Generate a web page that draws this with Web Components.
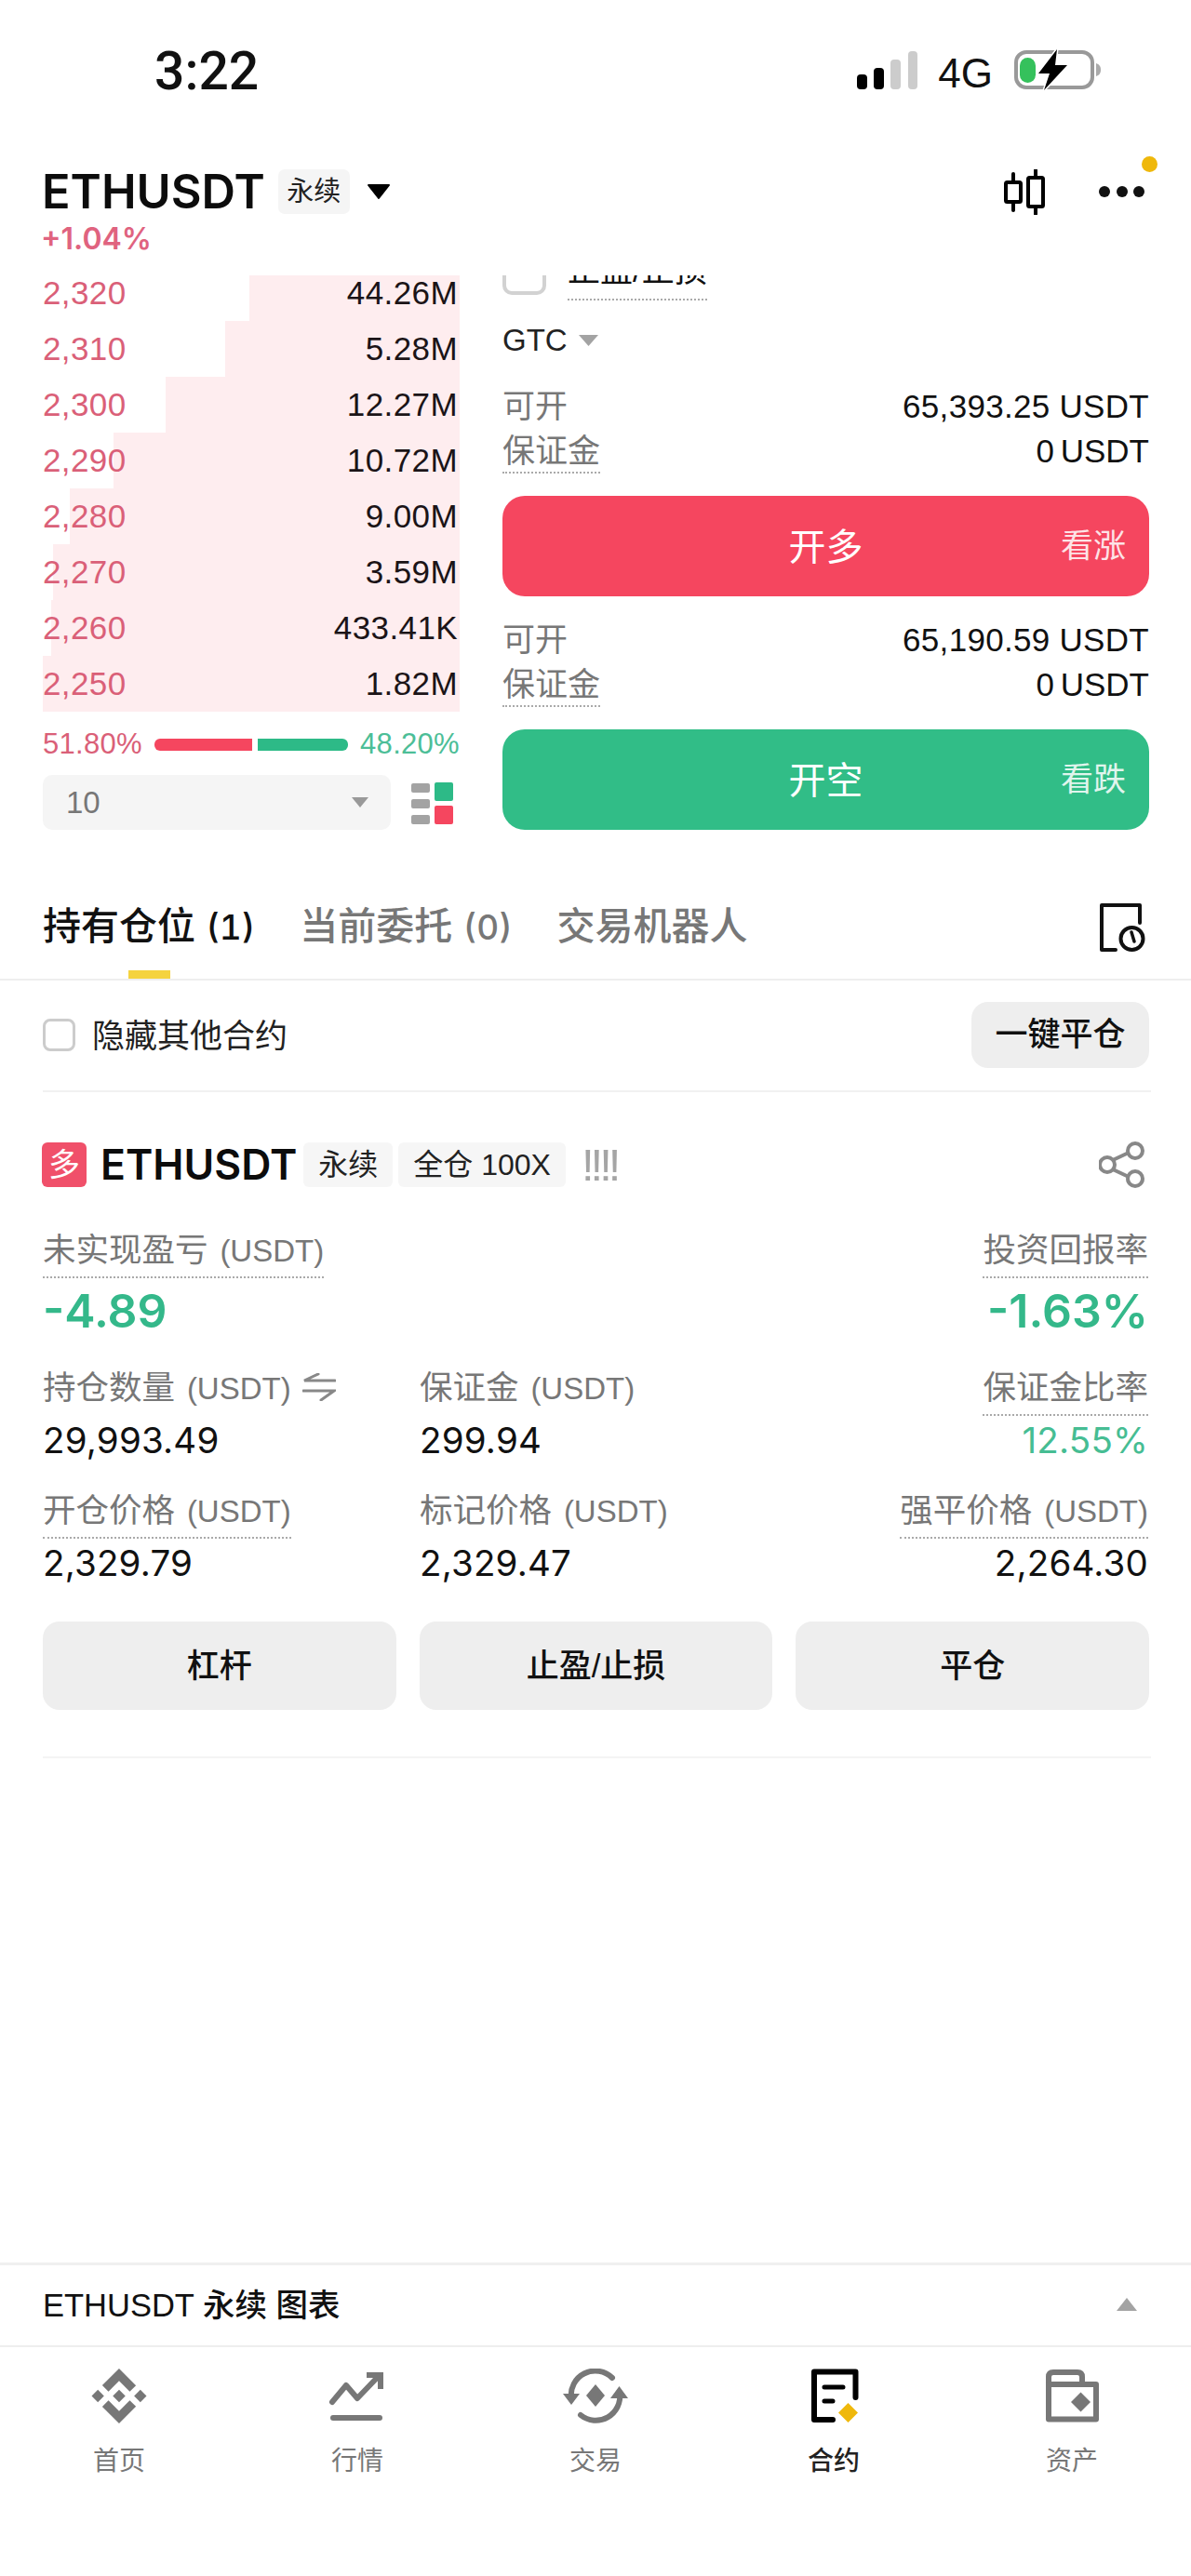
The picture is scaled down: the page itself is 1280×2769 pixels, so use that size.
<!DOCTYPE html>
<html lang="zh">
<head>
<meta charset="utf-8">
<title>ETHUSDT 永续</title>
<style>
  html, body { margin: 0; height: 100%; background: #fff; }
  body { font-family: "Liberation Sans", "Noto Sans CJK SC", sans-serif; color: #111; }
</style>
</head>
<body>
<trade-app>
  <status-bar></status-bar>
  <pair-header></pair-header>
  <trade-panel>
    <order-book slot="left"></order-book>
    <order-form slot="right"></order-form>
  </trade-panel>
  <position-tabs></position-tabs>
  <position-toolbar></position-toolbar>
  <position-card></position-card>
  <chart-bar></chart-bar>
  <tab-bar></tab-bar>
</trade-app>

<script>
// petite classe de base : on cree le shadow DOM et on pose le style + le html
class Base extends HTMLElement {
  constructor() {
    super();
    this.shadowroot = this.attachShadow({ mode: 'open' });
  }
  connectedCallback() {
    this.shadowroot.innerHTML = `<style>${this.css()}</style>${this.html()}`;
  }
}

// le conteneur de la page
class TradeApp extends Base {
  css() { return `
    :host { display: flex; flex-direction: column; height: 100vh; overflow: hidden; }
  `; }
  html() { return `<slot></slot>`; }
}

// barre de statut du telephone
class StatusBar extends Base {
  css() { return `
    :host { display: flex; height: 182px; box-sizing: border-box; padding: 49px 97px 0 166px; justify-content: space-between; }
    .time { font: 500 57px/56px Roboto, sans-serif; color: #111; }
    .right { display: flex; align-items: center; height: 56px; }
    .net { font-size: 44px; line-height: 56px; margin: 3px 23px 0 22px; color: #111; }
    svg { display: block; }
    .sig { margin-bottom: 3px; }
    .bat { margin-bottom: 4px; }
  `; }
  html() { return `
    <div class="time">3:22</div>
    <div class="right">
      <svg class="sig" width="65" height="41" viewBox="0 0 65 41">
        <rect x="0" y="25" width="11" height="16" rx="4" fill="#000"/>
        <rect x="18" y="18" width="11" height="23" rx="4" fill="#000"/>
        <rect x="36" y="9" width="11" height="32" rx="4" fill="#ccc"/>
        <rect x="55" y="0" width="10" height="41" rx="4" fill="#ccc"/>
      </svg>
      <div class="net">4G</div>
      <svg class="bat" width="93" height="44" viewBox="0 0 93 44">
        <rect x="2" y="3" width="82" height="38" rx="11" fill="none" stroke="#999" stroke-width="4"/>
        <path d="M88 15c3 1 5 3 5 7s-2 6-5 7z" fill="#aaa"/>
        <rect x="6" y="9" width="17" height="27" rx="8.5" fill="#35c15c"/>
        <path d="M46 0 L26 26 H38 L32 44 L57 17 H44 Z" fill="#000" stroke="#fff" stroke-width="3" paint-order="stroke" stroke-linejoin="round"/>
      </svg>
    </div>
  `; }
}

// titre de la paire et icones a droite
class PairHeader extends Base {
  css() { return `
    :host { display: block; padding: 0 50px 19px 46px; }
    .top { display: flex; align-items: center; height: 48px; }
    .name { margin-left: -1px; font: 600 50.5px/48px Inter, sans-serif; color: #0c0c0c; }
    .tag { margin-left: 14px; width: 77px; height: 48px; background: #f5f5f5; border-radius: 7px; font-size: 29px; line-height: 48px; text-align: center; color: #222; }
    .arrow { margin-left: 18px; }
    .icons { margin-left: auto; display: flex; align-items: center; gap: 58px; }
    .more { position: relative; display: block; width: 49px; height: 12px; }
    .badge { position: absolute; left: 46px; top: -32px; width: 17px; height: 17px; border-radius: 50%; background: #efb80b; }
    svg { display: block; }
    .change { margin: 7px 0 0 -2px; font: 600 32px/40px Inter, sans-serif; color: #e0637f; }
  `; }
  html() { return `
    <div class="top">
      <span class="name">ETHUSDT</span>
      <span class="tag">永续</span>
      <svg class="arrow" width="26" height="17" viewBox="0 0 26 17"><path d="M2 1H24L13 15Z" fill="#000" stroke="#000" stroke-width="2" stroke-linejoin="round"/></svg>
      <div class="icons">
        <svg width="44" height="49" viewBox="0 0 44 49" fill="none" stroke="#000" stroke-width="4">
          <path d="M10 5V44" stroke-linecap="round"/>
          <rect x="2" y="14" width="16" height="21" rx="1.5" fill="#fff"/>
          <path d="M34 1V48" stroke-linecap="round"/>
          <rect x="26" y="9" width="16" height="31" rx="1.5" fill="#fff"/>
        </svg>
        <span class="more">
          <svg width="49" height="12" viewBox="0 0 49 12" fill="#111"><circle cx="6" cy="6" r="6"/><circle cx="25" cy="6" r="6"/><circle cx="43" cy="6" r="6"/></svg>
          <span class="badge"></span>
        </span>
      </div>
    </div>
    <div class="change">+1.04%</div>
  `; }
}

class TradePanel extends Base {
  css() { return `
    :host { display: flex; height: 604px; overflow: hidden; padding-left: 46px; gap: 46px; }
    .l { display: block; width: 448px; flex: none; }
    .r { display: block; width: 695px; flex: none; }
  `; }
  html() { return `<div class="l"><slot name="left"></slot></div><div class="r"><slot name="right"></slot></div>`; }
}

// carnet d'ordres
class OrderBook extends Base {
  css() { return `
    :host { display: block; margin-top: -11px; }
    .row { display: flex; justify-content: space-between; align-items: center; height: 60px; font-size: 35px; line-height: 36px; letter-spacing: .4px; background-repeat: no-repeat; background-position: right; background-image: linear-gradient(#feedef, #feedef); }
    .row:last-of-type { border-radius: 0 0 4px 4px; }
    .p { color: #da6078; }
    .q { color: #1b1417; padding-right: 2px; }
    .ratio { display: flex; align-items: center; height: 36px; margin-top: 17px; font-size: 31px; letter-spacing: .3px; }
    .ratio .a { color: #da6078; }
    .ratio .b { color: #4cbe97; margin-left: auto; }
    .red { width: 105px; height: 13px; margin-left: 13px; background: #f5465f; border-radius: 6px 0 0 6px; }
    .green { width: 97px; height: 13px; margin-left: 6px; background: #2dba87; border-radius: 0 6px 6px 0; }
    .bottom { display: flex; align-items: center; gap: 22px; margin-top: 15px; }
    .select { display: flex; align-items: center; justify-content: space-between; box-sizing: border-box; width: 374px; height: 59px; padding: 0 24px 0 25px; background: #f5f5f5; border-radius: 10px; font-size: 33px; color: #777; }
    svg { display: block; }
  `; }
  html() {
    let rows = [
      ['2,320', '44.26M', 226], ['2,310', '5.28M', 252], ['2,300', '12.27M', 316], ['2,290', '10.72M', 372],
      ['2,280', '9.00M', 419], ['2,270', '3.59M', 437], ['2,260', '433.41K', 439], ['2,250', '1.82M', 448]
    ];
    return rows.map(r => `<div class="row" style="background-size:${r[2]}px 100%"><span class="p">${r[0]}</span><span class="q">${r[1]}</span></div>`).join('') + `
    <div class="ratio"><span class="a">51.80%</span><span class="red"></span><span class="green"></span><span class="b">48.20%</span></div>
    <div class="bottom">
      <div class="select"><span>10</span><svg width="18" height="11" viewBox="0 0 18 11"><path d="M0 0H18L9 11Z" fill="#999"/></svg></div>
      <svg width="45" height="46" viewBox="0 0 45 46">
        <rect x="0" y="2" width="20" height="10" rx="2" fill="#a3a3a3"/>
        <rect x="0" y="19" width="20" height="10" rx="2" fill="#a3a3a3"/>
        <rect x="0" y="36" width="20" height="10" rx="2" fill="#a3a3a3"/>
        <rect x="25" y="1" width="20" height="20" rx="2" fill="#2dba87"/>
        <rect x="25" y="26" width="20" height="20" rx="2" fill="#f5465f"/>
      </svg>
    </div>`;
  }
}

// un bloc du formulaire : les deux lignes et le gros bouton
class OrderSide extends Base {
  css() { return `
    :host { display: block; }
    .line { display: flex; justify-content: space-between; align-items: flex-start; font-size: 35px; line-height: 36px; color: #111; }
    .line + .line { margin-top: 12px; }
    .lab { color: #777; }
    .dot { padding-bottom: 4px; border-bottom: 2px dotted #aaa; }
    .amt { letter-spacing: .3px; }
    .zero { word-spacing: -3px; }
    .btn { position: relative; display: flex; align-items: center; justify-content: center; box-sizing: border-box; height: 108px; padding-bottom: 5px; margin-top: 24px; border-radius: 24px; color: #fff; font-size: 40px; font-weight: 400; }
    .hint { position: absolute; right: 25px; top: 0; line-height: 108px; font-size: 35px; font-weight: 400; opacity: .85; }
  `; }
  html() {
    let bg = this.getAttribute('kind') === 'long' ? '#f5465f' : '#31bd87';
    return `
      <div class="line"><span class="lab">可开</span><span class="amt">${this.getAttribute('amount')}</span></div>
      <div class="line"><span class="lab dot">保证金</span><span class="zero">0 USDT</span></div>
      <div class="btn" style="background:${bg}">${this.getAttribute('action')}<span class="hint">${this.getAttribute('hint')}</span></div>
    `;
  }
}

// formulaire a droite
class OrderForm extends Base {
  css() { return `
    :host { display: block; margin-top: -26px; }
    .tp { display: flex; align-items: flex-start; height: 53px; }
    .box { box-sizing: border-box; width: 47px; height: 47px; border: 4px solid #d2d2d2; border-radius: 10px; }
    .tplab { margin: 3px 0 0 23px; font-size: 35px; line-height: 36px; padding-bottom: 12px; border-bottom: 2px dotted #aaa; color: #111; }
    .gtc { display: flex; align-items: center; gap: 12px; height: 40px; margin-top: 23px; font-size: 33px; color: #222; }
    .first { display: block; margin-top: 33px; }
    .second { display: block; margin-top: 29px; }
  `; }
  html() { return `
    <div class="tp"><span class="box"></span><span class="tplab">止盈/止损</span></div>
    <div class="gtc">GTC <svg width="21" height="12" viewBox="0 0 21 12"><path d="M0 0H21L10.5 12Z" fill="#a3a3a3"/></svg></div>
    <order-side class="first" kind="long" amount="65,393.25 USDT" action="开多" hint="看涨"></order-side>
    <order-side class="second" kind="short" amount="65,190.59 USDT" action="开空" hint="看跌"></order-side>
  `; }
}

// onglets des positions
class PositionTabs extends Base {
  css() { return `
    :host { display: flex; gap: 48px; height: 152px; box-sizing: content-box; padding: 0 48px 0 46px; border-bottom: 2px solid #eee; }
    .tab { position: relative; height: 152px; padding-top: 72px; box-sizing: border-box; font-size: 41px; line-height: 48px; font-weight: 500; color: #777; white-space: nowrap; }
    .tab b { font: 500 37px/48px Inter, sans-serif; font-feature-settings: "tnum"; }
    .on { color: #111; }
    .on::after { content: ""; position: absolute; left: 92px; bottom: 0; width: 45px; height: 9px; background: #f5d33f; }
    svg { display: block; margin: 71px 0 0 auto; }
  `; }
  html() { return `
    <div class="tab on">持有仓位 <b>(1)</b></div>
    <div class="tab">当前委托 <b>(0)</b></div>
    <div class="tab">交易机器人</div>
    <svg width="50" height="52" viewBox="0 0 50 52" fill="none" stroke="#111" stroke-width="4" stroke-linecap="round" stroke-linejoin="round">
      <path d="M43 21V2H2V50H17"/>
      <circle cx="34.5" cy="38" r="12"/>
      <path d="M34 31L37 41" stroke-width="3.5"/>
    </svg>
  `; }
}

// ligne "masquer les autres contrats"
class PositionToolbar extends Base {
  css() { return `
    :host { display: block; margin: 0 43px 0 46px; height: 118px; box-sizing: content-box; border-bottom: 2px solid #f1f1f1; }
    .in { display: flex; align-items: center; height: 71px; padding: 23px 2px 0 0; }
    .box { box-sizing: border-box; width: 35px; height: 35px; border: 3px solid #ccc; border-radius: 8px; }
    .txt { margin: 0 0 4px 18px; font-size: 35px; color: #222; }
    .btn { margin-left: auto; width: 191px; height: 71px; border-radius: 18px; background: #eee; font-size: 35px; font-weight: 500; line-height: 69px; text-align: center; color: #111; }
  `; }
  html() { return `
    <div class="in"><span class="box"></span><span class="txt">隐藏其他合约</span><span class="btn">一键平仓</span></div>
  `; }
}

// une valeur de la position : libelle + chiffre
class PosStat extends Base {
  css() { return `
    :host { display: block; }
    :host([end]) { text-align: right; }
    .head { height: 50px; }
    .lab { display: inline-block; box-sizing: border-box; height: 36px; padding-top: 2px; line-height: 36px; font-size: 35.5px; color: #777; white-space: nowrap; vertical-align: top; }
    .u { height: 50px; border-bottom: 2px dotted #aaa; }
    .lab small { font-size: 33px; margin-left: 3px; }
    .val { margin-top: 4px; font: 400 38.5px/44px Inter, sans-serif; letter-spacing: .2px; color: #111; }
    :host([green]) .val { color: #46bd93; }
    :host([big]) .val { margin-top: 7px; font: 600 50px/56px Inter, sans-serif; letter-spacing: 0; color: #34b88a; }
    svg { vertical-align: -2px; margin-left: 12px; }
  `; }
  html() {
    let unit = this.getAttribute('unit');
    let swap = this.hasAttribute('swap') ? `<svg width="36" height="30" viewBox="0 0 36 30" fill="none" stroke="#888" stroke-width="3" stroke-linecap="round"><path d="M35 8H2L17 1"/><path d="M1 19H34L20 29"/></svg>` : '';
    return `
      <div class="head"><span class="lab ${this.hasAttribute('dotted') ? 'u' : ''}">${this.getAttribute('label')}${unit ? ` <small>${unit}</small>` : ''}${swap}</span></div>
      <div class="val">${this.getAttribute('value')}</div>
    `;
  }
}

// carte de la position ouverte
class PositionCard extends Base {
  css() { return `
    :host { display: block; margin: 0 43px 0 46px; padding-top: 54px; border-bottom: 2px solid #f4f4f4; height: 660px; box-sizing: content-box; }
    .head { display: flex; align-items: center; height: 48px; }
    .long { width: 48px; height: 48px; margin-left: -1px; border-radius: 6px; background: #f0506a; color: #fff; font-size: 34px; line-height: 48px; text-align: center; }
    .name { margin: 0 7px 0 15px; font: 600 44.5px/48px Inter, sans-serif; color: #0c0c0c; }
    .tag { margin-right: 6px; padding: 0 16px; height: 48px; border-radius: 6px; background: #f6f6f6; font-size: 32px; line-height: 48px; color: #222; }
    .warn { margin-left: 11px; font-size: 49px; letter-spacing: -4px; line-height: 48px; color: #a5a5a5; }
    .share { margin-left: auto; margin-right: 6px; display: block; }
    .r1 { display: flex; justify-content: space-between; margin-top: 48px; padding-right: 3px; }
    .grid { display: grid; grid-template-columns: 405px 1fr auto; row-gap: 34px; margin-top: 35px; padding-right: 3px; }
    .acts { display: grid; grid-template-columns: repeat(3, 1fr); gap: 25px; margin: 41px 2px 0 0; }
    .act { height: 95px; border-radius: 18px; background: #eee; font-size: 35px; font-weight: 500; line-height: 95px; text-align: center; color: #111; }
  `; }
  html() { return `
    <div class="head">
      <span class="long">多</span>
      <span class="name">ETHUSDT</span>
      <span class="tag">永续</span>
      <span class="tag">全仓 100X</span>
      <span class="warn">!!!!</span>
      <svg class="share" width="50" height="50" viewBox="0 0 50 50" fill="none" stroke="#888" stroke-width="4">
        <path d="M15 20L32 12M15 30L32 38" />
        <circle cx="39" cy="10" r="8"/>
        <circle cx="9" cy="25" r="8" fill="#fff"/>
        <circle cx="39" cy="40" r="8"/>
      </svg>
    </div>
    <div class="r1">
      <pos-stat big dotted label="未实现盈亏" unit="(USDT)" value="-4.89"></pos-stat>
      <pos-stat big dotted end label="投资回报率" value="-1.63%"></pos-stat>
    </div>
    <div class="grid">
      <pos-stat swap label="持仓数量" unit="(USDT)" value="29,993.49"></pos-stat>
      <pos-stat label="保证金" unit="(USDT)" value="299.94"></pos-stat>
      <pos-stat end green dotted label="保证金比率" value="12.55%"></pos-stat>
      <pos-stat dotted label="开仓价格" unit="(USDT)" value="2,329.79"></pos-stat>
      <pos-stat label="标记价格" unit="(USDT)" value="2,329.47"></pos-stat>
      <pos-stat end dotted label="强平价格" unit="(USDT)" value="2,264.30"></pos-stat>
    </div>
    <div class="acts">
      <div class="act">杠杆</div>
      <div class="act">止盈/止损</div>
      <div class="act">平仓</div>
    </div>
  `; }
}

// barre du graphique repliee
class ChartBar extends Base {
  css() { return `
    :host { display: flex; align-items: center; justify-content: space-between; box-sizing: border-box; margin-top: auto; height: 91px; padding: 0 58px 6px 46px; border-top: 3px solid #f0f0f0; border-bottom: 2px solid #eee; font-size: 34.5px; font-weight: 500; color: #111; }
    svg { display: block; margin-top: 4px; }
  `; }
  html() { return `<span>ETHUSDT 永续 图表</span><svg width="22" height="14" viewBox="0 0 22 14"><path d="M11 0L22 14H0Z" fill="#a3a3a3"/></svg>`; }
}

// navigation du bas
class TabBar extends Base {
  css() { return `
    :host { display: grid; grid-template-columns: repeat(5, 1fr); height: 246px; box-sizing: border-box; padding-top: 23px; }
    .item { display: flex; flex-direction: column; align-items: center; font-size: 28px; color: #777; }
    .item svg { display: block; height: 62px; }
    .item span { margin-top: 20px; line-height: 36px; }
    .on { color: #222; font-weight: 500; }
  `; }
  html() {
    let G = '#777';
    let items = [
      ['首页', `<g transform="translate(10.5 0) scale(.466)" fill="${G}"><path d="M38.73 53.2L63.3 28.63 87.89 53.21l14.3-14.3L63.3 0 24.43 38.88z"/><path d="M0 63.31l14.3-14.3 14.3 14.3-14.3 14.3z"/><path d="M38.73 73.41L63.3 97.98 87.89 73.4l14.31 14.29L63.3 126.61 24.43 87.73z"/><path d="M97.99 63.31l14.3-14.3 14.31 14.3-14.3 14.3z"/><path d="M77.83 63.3L63.3 48.77 48.79 63.28 63.3 77.8z"/></g>`],
      ['行情', `<g fill="none" stroke="${G}" stroke-width="6" stroke-linecap="round" stroke-linejoin="round"><path d="M13 36L28 18L40 32L63 8"/><path d="M50 7H65V22" stroke-linecap="butt" stroke-linejoin="miter"/><path d="M14 53H64"/></g>`],
      ['交易', `<g fill="none" stroke="${G}" stroke-width="6" stroke-linecap="round"><path d="M14 32A26 26 0 0 1 58 10"/><path d="M66 26A26 26 0 0 1 24 50"/></g><path d="M5 27H23L14 39ZM56 32H75L65.5 19Z" fill="${G}"/><path d="M40 17L50 29L40 41L30 29Z" fill="${G}"/>`],
      ['合约', `<g fill="none" stroke="#000" stroke-width="6" stroke-linecap="round" stroke-linejoin="round"><path d="M63.5 31V3.5H19V55H39"/></g><path d="M30 20H50M30 35H39" stroke="#000" stroke-width="5" stroke-linecap="round"/><path d="M55.5 37L66 47.5L55.5 58L45 47.5Z" fill="#efb80b"/>`],
      ['资产', `<g fill="none" stroke="${G}" stroke-width="6" stroke-linejoin="round"><path d="M15 54.5V9Q15 4 20 4H46Q51 4 51 9V17"/><path d="M15 17H66V54.5H15Z"/></g><path d="M49.5 25.5L60 36L49.5 46.5L39 36Z" fill="${G}"/>`]
    ];
    return items.map((it, i) => `<div class="item ${i === 3 ? 'on' : ''}"><svg width="80" height="62" viewBox="0 0 80 62">${it[1]}</svg><span>${it[0]}</span></div>`).join('');
  }
}

customElements.define('trade-app', TradeApp);
customElements.define('status-bar', StatusBar);
customElements.define('pair-header', PairHeader);
customElements.define('trade-panel', TradePanel);
customElements.define('order-book', OrderBook);
customElements.define('order-side', OrderSide);
customElements.define('order-form', OrderForm);
customElements.define('position-tabs', PositionTabs);
customElements.define('position-toolbar', PositionToolbar);
customElements.define('pos-stat', PosStat);
customElements.define('position-card', PositionCard);
customElements.define('chart-bar', ChartBar);
customElements.define('tab-bar', TabBar);
</script>
</body>
</html>
